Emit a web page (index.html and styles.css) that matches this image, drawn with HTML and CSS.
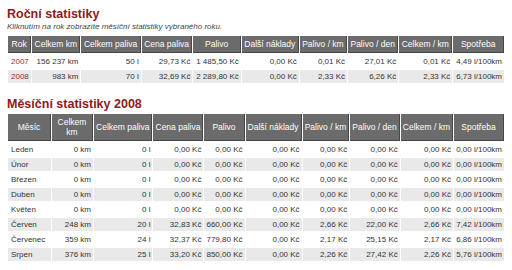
FILE: index.html
```html
<!doctype html>
<html lang="cs">
  <head>
    <meta charset="UTF-8" />
    <title>Statistiky</title>
    <link rel="stylesheet" href="styles.css">
  </head>
  <body>
    <h2>Roční statistiky</h2>
    <p class="hint">Kliknutím na rok zobrazíte měsíční statistiky vybraného roku.</p>
    <table class="stats">
      <tr>
        <th>Rok</th><th>Celkem km</th><th>Celkem paliva</th><th>Cena paliva</th><th>Palivo</th>
        <th>Další náklady</th><th>Palivo / km</th><th>Palivo / den</th><th>Celkem / km</th><th>Spotřeba</th>
      </tr>
      <tr>
        <td class="first"><a href="#">2007</a></td><td>156 237 km</td><td>50 l</td><td>29,73 Kč</td><td>1 485,50 Kč</td>
        <td>0,00 Kč</td><td>0,01 Kč</td><td>27,01 Kč</td><td>0,01 Kč</td><td>4,49 l/100km</td>
      </tr>
      <tr class="odd">
        <td class="first"><a href="#">2008</a></td><td>983 km</td><td>70 l</td><td>32,69 Kč</td><td>2 289,80 Kč</td>
        <td>0,00 Kč</td><td>2,33 Kč</td><td>6,26 Kč</td><td>2,33 Kč</td><td>6,73 l/100km</td>
      </tr>
    </table>

    <h2 class="second">Měsíční statistiky 2008</h2>
    <table class="stats">
      <tr>
        <th class="month">Měsíc</th><th class="wrap">Celkem km</th><th>Celkem paliva</th><th>Cena paliva</th><th>Palivo</th>
        <th>Další náklady</th><th>Palivo / km</th><th>Palivo / den</th><th>Celkem / km</th><th>Spotřeba</th>
      </tr>
      <tr>
        <td class="first">Leden</td><td>0 km</td><td>0 l</td><td>0,00 Kč</td><td>0,00 Kč</td>
        <td>0,00 Kč</td><td>0,00 Kč</td><td>0,00 Kč</td><td>0,00 Kč</td><td>0,00 l/100km</td>
      </tr>
      <tr class="odd">
        <td class="first">Únor</td><td>0 km</td><td>0 l</td><td>0,00 Kč</td><td>0,00 Kč</td>
        <td>0,00 Kč</td><td>0,00 Kč</td><td>0,00 Kč</td><td>0,00 Kč</td><td>0,00 l/100km</td>
      </tr>
      <tr>
        <td class="first">Březen</td><td>0 km</td><td>0 l</td><td>0,00 Kč</td><td>0,00 Kč</td>
        <td>0,00 Kč</td><td>0,00 Kč</td><td>0,00 Kč</td><td>0,00 Kč</td><td>0,00 l/100km</td>
      </tr>
      <tr class="odd">
        <td class="first">Duben</td><td>0 km</td><td>0 l</td><td>0,00 Kč</td><td>0,00 Kč</td>
        <td>0,00 Kč</td><td>0,00 Kč</td><td>0,00 Kč</td><td>0,00 Kč</td><td>0,00 l/100km</td>
      </tr>
      <tr>
        <td class="first">Květen</td><td>0 km</td><td>0 l</td><td>0,00 Kč</td><td>0,00 Kč</td>
        <td>0,00 Kč</td><td>0,00 Kč</td><td>0,00 Kč</td><td>0,00 Kč</td><td>0,00 l/100km</td>
      </tr>
      <tr class="odd">
        <td class="first">Červen</td><td>248 km</td><td>20 l</td><td>32,83 Kč</td><td>660,00 Kč</td>
        <td>0,00 Kč</td><td>2,66 Kč</td><td>22,00 Kč</td><td>2,66 Kč</td><td>7,42 l/100km</td>
      </tr>
      <tr>
        <td class="first">Červenec</td><td>359 km</td><td>24 l</td><td>32,37 Kč</td><td>779,80 Kč</td>
        <td>0,00 Kč</td><td>2,17 Kč</td><td>25,15 Kč</td><td>2,17 Kč</td><td>6,86 l/100km</td>
      </tr>
      <tr class="odd">
        <td class="first">Srpen</td><td>376 km</td><td>25 l</td><td>33,20 Kč</td><td>850,00 Kč</td>
        <td>0,00 Kč</td><td>2,26 Kč</td><td>27,42 Kč</td><td>2,26 Kč</td><td>5,76 l/100km</td>
      </tr>
    </table>
  </body>
</html>
```

FILE: styles.css
```css
body {
  margin: 0;
  padding: 7px 7px;
  background-color: white;
  font-family: "Liberation Sans", Arial, sans-serif;
  color: #333;
}
h2 {
  margin: 0;
  font-size: 12.5px;
  line-height: 15px;
  color: #8e1b1b;
}
h2.second {
  margin-top: 12px;
}
.hint {
  margin: 0 0 3px 0;
  font-size: 8px;
  font-style: italic;
  color: #444;
}
.stats {
  width: 100%;
  border-collapse: separate;
  border-spacing: 1px 2px;
  font-size: 8px;
}
.stats th {
  background-color: #6b6b6b;
  color: white;
  font-weight: normal;
  font-size: 8.5px;
  line-height: 10px;
  padding: 3px 2px;
  border-right: 1px solid #464646;
  border-bottom: 1px solid #464646;
  text-align: center;
  white-space: nowrap;
}
.stats th.month {
  width: 38px;
}
.stats th.wrap {
  white-space: normal;
  width: 36px;
}
.stats td {
  padding: 2px 2px;
  line-height: 9px;
  text-align: right;
  white-space: nowrap;
}
.stats td.first {
  text-align: left;
  padding-left: 3px;
}
.stats tr.odd td {
  background-color: #e9e9e9;
}
.stats a {
  color: #9a2a2a;
  text-decoration: none;
}
```
